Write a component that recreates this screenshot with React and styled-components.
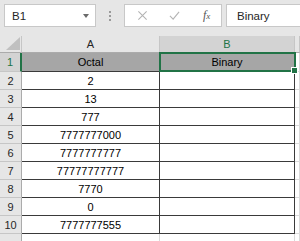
import React from 'react'
import styled, { createGlobalStyle } from 'styled-components'

const GlobalStyle = createGlobalStyle`
body {
  margin: 0;
  background: #ffffff;
  font-family: "Liberation Sans", Arial, sans-serif;
}
`

const rows = [
    { n: 1, a: 'Octal', b: 'Binary', head: true },
    { n: 2, a: '2' },
    { n: 3, a: '13' },
    { n: 4, a: '777' },
    { n: 5, a: '7777777000' },
    { n: 6, a: '7777777777' },
    { n: 7, a: '77777777777' },
    { n: 8, a: '7770' },
    { n: 9, a: '0' },
    { n: 10, a: '7777777555' },
]

function App() {
    return (
        <Window>
            <GlobalStyle />
            <FormulaBar>
                <NameBox>
                    B1
                    <Caret />
                </NameBox>
                <Dots>
                    <span />
                    <span />
                    <span />
                </Dots>
                <ButtonBox>
                    <BarIcon viewBox="0 0 12 12">
                        <path d="M1.5 1.5 L10.5 10.5 M10.5 1.5 L1.5 10.5" stroke="#b4b4b4" strokeWidth="1.2" fill="none" />
                    </BarIcon>
                    <BarIcon viewBox="0 0 12 12">
                        <path d="M1 6.5 L4.5 10 L11 2" stroke="#b4b4b4" strokeWidth="1.2" fill="none" />
                    </BarIcon>
                    <Fx>f<sub>x</sub></Fx>
                </ButtonBox>
                <FormulaInput>Binary</FormulaInput>
            </FormulaBar>

            <Sheet>
                <Row $height={17}>
                    <Corner>
                        <svg width="14" height="13" viewBox="0 0 14 13">
                            <polygon points="14,0 14,13 0,13" fill="#c0c0c0" />
                        </svg>
                    </Corner>
                    <ColHead>A</ColHead>
                    <ColHead $active>B</ColHead>
                    <ColHead />
                </Row>

                {rows.map((r) => (
                    <Row key={r.n} $height={r.n === 1 ? 19 : 18}>
                        <RowHead $active={r.n === 1}>{r.n}</RowHead>
                        <Cell $fill={r.head}>{r.a}</Cell>
                        <Cell $fill={r.head}>{r.b}</Cell>
                        <Blank />
                    </Row>
                ))}

                <Row $height={18}>
                    <RowHead />
                    <Blank />
                    <Blank />
                    <Blank />
                </Row>

                <Selection>
                    <Handle />
                </Selection>
            </Sheet>
        </Window>
    )
}

const Window = styled.div`
width: 300px;
height: 241px;
overflow: hidden;
background: #ffffff;
`

const FormulaBar = styled.div`
height: 36px;
box-sizing: border-box;
padding: 4px 0 0 4px;
display: flex;
align-items: flex-start;
background: #e6e6e6;
`

const Box = styled.div`
height: 23px;
box-sizing: border-box;
background: #ffffff;
border: 1px solid #c8c8c8;
display: flex;
align-items: center;
font-size: 11.5px;
color: #262626;
`

const NameBox = styled(Box)`
width: 92px;
padding-left: 7px;
position: relative;
`

const Caret = styled.div`
position: absolute;
right: 6px;
top: 9px;
width: 0;
height: 0;
border-left: 3.5px solid transparent;
border-right: 3.5px solid transparent;
border-top: 4px solid #6a6a6a;
`

const Dots = styled.div`
width: 28px;
height: 23px;
display: flex;
flex-direction: column;
align-items: center;
justify-content: center;
gap: 2px;

span {
  width: 2px;
  height: 2px;
  background: #9a9a9a;
}
`

const ButtonBox = styled(Box)`
width: 98px;
padding-left: 12px;
gap: 21px;
`

const BarIcon = styled.svg`
width: 11px;
height: 11px;
`

const Fx = styled.span`
font-family: "Liberation Serif", "Times New Roman", serif;
font-style: italic;
font-size: 12px;
color: #555555;
margin-left: 2px;

sub {
  font-size: 9px;
  vertical-align: 0;
}
`

const FormulaInput = styled(Box)`
flex: 1;
margin-left: 4px;
padding-left: 10px;
border-right: none;
`

const Sheet = styled.div`
position: relative;
display: flex;
flex-direction: column;
`

const Row = styled.div`
display: grid;
grid-template-columns: 22px 138px 135px 1fr;
height: ${(p) => p.$height}px;
`

const Corner = styled.div`
background: #e6e6e6;
border-right: 1px solid #c6c6c6;
border-bottom: 1px solid #ababab;
box-sizing: border-box;
display: flex;
align-items: flex-end;
justify-content: flex-end;
padding: 0 1px 2px 0;
`

const ColHead = styled.div`
background: ${(p) => (p.$active ? '#d3d3d3' : '#e6e6e6')};
color: ${(p) => (p.$active ? '#217346' : '#262626')};
border-right: 1px solid #c6c6c6;
border-bottom: 1px solid ${(p) => (p.$active ? '#217346' : '#ababab')};
box-sizing: border-box;
font-size: 11px;
display: flex;
align-items: center;
justify-content: center;
`

const RowHead = styled.div`
background: ${(p) => (p.$active ? '#d3d3d3' : '#e6e6e6')};
color: ${(p) => (p.$active ? '#217346' : '#262626')};
border-right: ${(p) => (p.$active ? '2px solid #217346' : '1px solid #ababab')};
border-bottom: 1px solid #c6c6c6;
box-sizing: border-box;
font-size: 11px;
display: flex;
align-items: center;
justify-content: center;
`

const Cell = styled.div`
background: ${(p) => (p.$fill ? '#a6a6a6' : '#ffffff')};
border-right: 1px solid #3a3a3a;
border-bottom: 1px solid #3a3a3a;
box-sizing: border-box;
font-size: 11px;
color: #000000;
display: flex;
align-items: center;
justify-content: center;
`

const Blank = styled.div`
background: #ffffff;
border-right: 1px solid #dadada;
border-bottom: 1px solid #dadada;
box-sizing: border-box;
`

const Selection = styled.div`
position: absolute;
left: 159px;
top: 16px;
width: 137px;
height: 20px;
box-sizing: border-box;
border: 2px solid #217346;
`

const Handle = styled.div`
position: absolute;
right: -4px;
bottom: -4px;
width: 5px;
height: 5px;
background: #217346;
border: 1px solid #ffffff;
`

export default App
